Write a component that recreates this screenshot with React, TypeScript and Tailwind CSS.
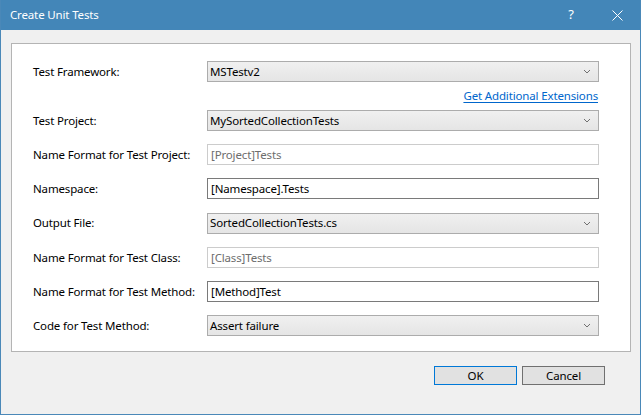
import React from "react";

const font = { fontFamily: '"Noto Sans", "Open Sans", sans-serif' };

type Row =
  | { label: string; kind: "combo"; value: string }
  | { label: string; kind: "text"; value: string }
  | { label: string; kind: "disabled"; value: string };

const rows: Row[] = [
  { label: "Test Project:", kind: "combo", value: "MySortedCollectionTests" },
  { label: "Name Format for Test Project:", kind: "disabled", value: "[Project]Tests" },
  { label: "Namespace:", kind: "text", value: "[Namespace].Tests" },
  { label: "Output File:", kind: "combo", value: "SortedCollectionTests.cs" },
  { label: "Name Format for Test Class:", kind: "disabled", value: "[Class]Tests" },
  { label: "Name Format for Test Method:", kind: "text", value: "[Method]Test" },
  { label: "Code for Test Method:", kind: "combo", value: "Assert failure" },
];

function Chevron() {
  return (
    <svg width="8" height="5" viewBox="0 0 8 5" className="shrink-0">
      <path d="M1 1 L4 4 L7 1" fill="none" stroke="#707070" strokeWidth="1" />
    </svg>
  );
}

function Field({ row }: { row: Row }) {
  if (row.kind === "combo") {
    return (
      <div className="flex h-[21px] w-[392px] items-center justify-between border border-[#acacac] bg-gradient-to-b from-[#f0f0f0] to-[#e5e5e5] pl-[2px] pr-[7px] text-[11.5px] text-black">
        <span>{row.value}</span>
        <Chevron />
      </div>
    );
  }
  if (row.kind === "disabled") {
    return (
      <div className="flex h-[21px] w-[392px] items-center border border-[#cccccc] bg-white px-[3px] text-[11.5px] text-[#6d6d6d]">
        {row.value}
      </div>
    );
  }
  return (
    <div className="flex h-[21px] w-[392px] items-center border border-[#7a7a7a] bg-white px-[3px] text-[11.5px] text-black">
      {row.value}
    </div>
  );
}

export default function App() {
  return (
    <div
      style={font}
      className="flex h-[415px] w-[641px] flex-col border-x border-b border-[#4a88b8] bg-[#f0f0f0] tracking-[-0.15px]"
    >
      {/* title bar */}
      <div className="flex h-[30px] shrink-0 items-center justify-between bg-[#4386b8] pl-[9px] text-white">
        <span className="text-[11.5px]">Create Unit Tests</span>
        <div className="flex h-full items-center">
          <span className="flex w-[46px] justify-center text-[13px]">?</span>
          <span className="flex w-[46px] justify-center">
            <svg width="11" height="11" viewBox="0 0 11 11">
              <path d="M0.5 0.5 L10.5 10.5 M10.5 0.5 L0.5 10.5" stroke="white" strokeWidth="1" />
            </svg>
          </span>
        </div>
      </div>

      {/* main panel */}
      <div className="ml-[10px] mr-[9px] mt-[13px] border border-[#b4b4b4] bg-white pb-[15px] pl-[21px] pr-[31px] pt-[17px]">
        <div className="flex items-center">
          <div className="w-[174px] text-[11.5px] text-black">Test Framework:</div>
          <Field row={{ label: "", kind: "combo", value: "MSTestv2" }} />
        </div>
        <div className="flex h-[28px] items-center justify-end pr-[1px]">
          <span className="text-[11.5px] text-[#0066cc] underline underline-offset-2">
            Get Additional Extensions
          </span>
        </div>
        <div className="flex flex-col gap-[13.2px]">
          {rows.map((r) => (
            <div key={r.label} className="flex items-center">
              <div className="w-[174px] text-[11.5px] text-black">{r.label}</div>
              <Field row={r} />
            </div>
          ))}
        </div>
      </div>

      {/* buttons */}
      <div className="mr-[35px] mt-[14px] flex justify-end gap-[5px]">
        <button className="h-[19px] w-[83px] border border-[#0078d7] bg-[#e1e1e1] text-[11.5px] leading-none text-black">
          OK
        </button>
        <button className="h-[19px] w-[83px] border border-[#707070] bg-[#e1e1e1] text-[11.5px] leading-none text-black">
          Cancel
        </button>
      </div>
    </div>
  );
}
